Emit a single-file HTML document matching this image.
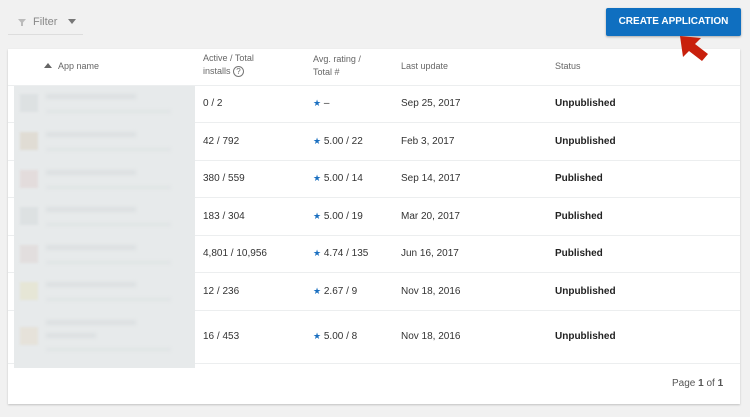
<!DOCTYPE html>
<html><head><style>
*{margin:0;padding:0;box-sizing:border-box}
body{width:750px;height:417px;background:#f1f1f1;font-family:"Liberation Sans",sans-serif;position:relative;overflow:hidden;color:#333}
.a{position:absolute}
.card{left:8px;top:49px;width:732px;height:355px;background:#fff;box-shadow:0 1px 2px rgba(0,0,0,.2)}
.t{font-size:10px;position:absolute;white-space:nowrap}
.h{color:#666;font-size:9px;line-height:13px}
.line{position:absolute;left:8px;width:732px;height:1px;background:#eceeef}
.st{font-weight:bold;color:#222}
.star{color:#1a6fc0;font-size:9px}
.ic{position:absolute;left:20px;width:18px;height:18px;background:#dde1e2;filter:blur(1px)}
.b1{position:absolute;left:46px;width:90px;height:5px;background:#dde1e2;filter:blur(1.5px)}
.b2{position:absolute;left:46px;width:125px;height:3px;background:#e0e4e5;filter:blur(1.5px)}
</style></head><body>
<div class="a" style="left:8px;top:12px;width:75px;height:23px;border-bottom:1px solid #ddd"></div>
<svg class="a" style="left:17px;top:17px" width="10" height="10"><path d="M1 2h8L6 5.5V9H4V5.5z" fill="#bbb"/></svg>
<div class="t" style="left:33px;top:16px;color:#888;font-size:11px">Filter</div>
<svg class="a" style="left:68px;top:19px" width="9" height="6"><path d="M0 0h8L4 5z" fill="#777"/></svg>
<div class="a" style="left:606px;top:8px;width:135px;height:28px;background:#0f6fc0;border-radius:2px;box-shadow:0 1px 2px rgba(0,0,0,.3);color:#fff;font-size:10px;font-weight:bold;text-align:center;line-height:28px">CREATE APPLICATION</div>
<div class="a card"></div>
<svg class="a" style="left:676px;top:32px" width="40" height="32"><path d="M4 4L25 6L19 12L32 22L26 29L13 19L7 25Z" fill="#c8200c"/></svg>
<svg class="a" style="left:44px;top:63px" width="8" height="6"><path d="M0 5L4 0L8 5Z" fill="#666"/></svg>
<div class="t h" style="left:58px;top:60px">App name</div>
<div class="t h" style="left:203px;top:52px">Active / Total<br>installs <span style="display:inline-block;width:11px;height:11px;border:1px solid #777;border-radius:50%;font-size:8px;text-align:center;line-height:9px">?</span></div>
<div class="t h" style="left:313px;top:53px">Avg. rating /<br>Total #</div>
<div class="t h" style="left:401px;top:60px">Last update</div>
<div class="t h" style="left:555px;top:60px">Status</div>
<div class="line" style="top:85px"></div>
<div class="line" style="top:122px"></div>
<div class="line" style="top:160px"></div>
<div class="line" style="top:197px"></div>
<div class="line" style="top:235px"></div>
<div class="line" style="top:272px"></div>
<div class="line" style="top:310px"></div>
<div class="line" style="top:363px"></div>
<div class="a" style="left:14px;top:86px;width:181px;height:282px;background:#e7eaeb"></div>
<div class="ic" style="top:94px"></div><div class="b1" style="top:94px"></div><div class="b2" style="top:110px"></div>
<div class="ic" style="top:132px;background:#e0dcd4"></div><div class="b1" style="top:132px"></div><div class="b2" style="top:148px"></div>
<div class="ic" style="top:170px;background:#e3dcdc"></div><div class="b1" style="top:170px"></div><div class="b2" style="top:186px"></div>
<div class="ic" style="top:207px"></div><div class="b1" style="top:207px"></div><div class="b2" style="top:223px"></div>
<div class="ic" style="top:245px;background:#e2dede"></div><div class="b1" style="top:245px"></div><div class="b2" style="top:261px"></div>
<div class="ic" style="top:282px;background:#e6e6d6"></div><div class="b1" style="top:282px"></div><div class="b2" style="top:298px"></div>
<div class="ic" style="top:327px;background:#e6e2da"></div><div class="b1" style="top:320px"></div><div class="b1" style="top:333px;width:50px"></div><div class="b2" style="top:348px"></div>

<div class="t" style="left:203px;top:98px">0 / 2</div><div class="t" style="left:313px;top:98px"><span class="star">★</span> –</div><div class="t" style="left:401px;top:98px">Sep 25, 2017</div><div class="t st" style="left:555px;top:98px">Unpublished</div>
<div class="t" style="left:203px;top:136px">42 / 792</div><div class="t" style="left:313px;top:136px"><span class="star">★</span> 5.00 / 22</div><div class="t" style="left:401px;top:136px">Feb 3, 2017</div><div class="t st" style="left:555px;top:136px">Unpublished</div>
<div class="t" style="left:203px;top:173px">380 / 559</div><div class="t" style="left:313px;top:173px"><span class="star">★</span> 5.00 / 14</div><div class="t" style="left:401px;top:173px">Sep 14, 2017</div><div class="t st" style="left:555px;top:173px">Published</div>
<div class="t" style="left:203px;top:211px">183 / 304</div><div class="t" style="left:313px;top:211px"><span class="star">★</span> 5.00 / 19</div><div class="t" style="left:401px;top:211px">Mar 20, 2017</div><div class="t st" style="left:555px;top:211px">Published</div>
<div class="t" style="left:203px;top:248px">4,801 / 10,956</div><div class="t" style="left:313px;top:248px"><span class="star">★</span> 4.74 / 135</div><div class="t" style="left:401px;top:248px">Jun 16, 2017</div><div class="t st" style="left:555px;top:248px">Published</div>
<div class="t" style="left:203px;top:286px">12 / 236</div><div class="t" style="left:313px;top:286px"><span class="star">★</span> 2.67 / 9</div><div class="t" style="left:401px;top:286px">Nov 18, 2016</div><div class="t st" style="left:555px;top:286px">Unpublished</div>
<div class="t" style="left:203px;top:331px">16 / 453</div><div class="t" style="left:313px;top:331px"><span class="star">★</span> 5.00 / 8</div><div class="t" style="left:401px;top:331px">Nov 18, 2016</div><div class="t st" style="left:555px;top:331px">Unpublished</div>
<div class="t" style="left:672px;top:378px;color:#555">Page <b>1</b> of <b>1</b></div>
</body></html>
